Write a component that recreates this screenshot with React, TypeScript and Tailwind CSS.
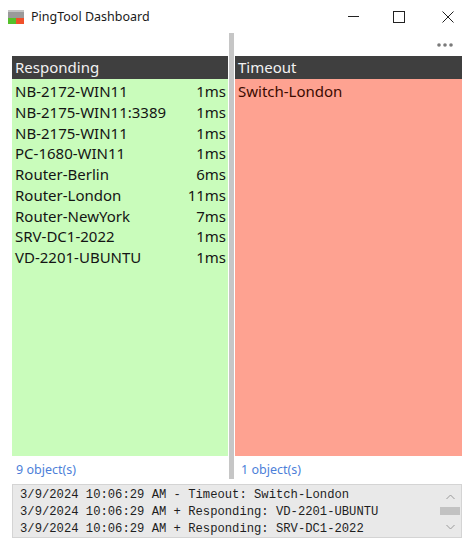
import { FC } from "react";

const responding = [
  { host: "NB-2172-WIN11", ms: "1ms" },
  { host: "NB-2175-WIN11:3389", ms: "1ms" },
  { host: "NB-2175-WIN11", ms: "1ms" },
  { host: "PC-1680-WIN11", ms: "1ms" },
  { host: "Router-Berlin", ms: "6ms" },
  { host: "Router-London", ms: "11ms" },
  { host: "Router-NewYork", ms: "7ms" },
  { host: "SRV-DC1-2022", ms: "1ms" },
  { host: "VD-2201-UBUNTU", ms: "1ms" },
];

const timeout = ["Switch-London"];

const log = [
  "3/9/2024 10:06:29 AM - Timeout: Switch-London",
  "3/9/2024 10:06:29 AM + Responding: VD-2201-UBUNTU",
  "3/9/2024 10:06:29 AM + Responding: SRV-DC1-2022",
];

const AppIcon = () => (
  <svg width="16" height="14" viewBox="0 0 16 14">
    <rect x="0" y="0" width="16" height="8" fill="#9a9a9a" />
    <rect x="0" y="0" width="16" height="2" fill="#c4c4c4" />
    <rect x="0" y="8" width="8" height="6" fill="#55c02b" />
    <rect x="8" y="8" width="8" height="6" fill="#f0502a" />
  </svg>
);

const TitleBar = () => (
  <div className="h-[33px] flex items-center shrink-0">
    <div className="pl-[8px] pr-[7px] flex items-center">
      <AppIcon />
    </div>
    <span className="text-[12.5px] text-[#1a1a1a] pt-[1px]">PingTool Dashboard</span>
    <div className="ml-auto flex h-full">
      <div className="w-[46px] h-full flex items-center justify-center">
        <svg width="11" height="11" viewBox="0 0 11 11">
          <path d="M0 5.5 H11" stroke="#222" strokeWidth="1" />
        </svg>
      </div>
      <div className="w-[46px] h-full flex items-center justify-center">
        <svg width="12" height="12" viewBox="0 0 12 12">
          <rect x="0.5" y="0.5" width="11" height="11" fill="none" stroke="#222" strokeWidth="1" />
        </svg>
      </div>
      <div className="w-[52px] h-full flex items-center justify-center">
        <svg width="12" height="12" viewBox="0 0 12 12">
          <path d="M0.5 0.5 L11.5 11.5 M11.5 0.5 L0.5 11.5" stroke="#222" strokeWidth="1" />
        </svg>
      </div>
    </div>
  </div>
);

const App: FC = () => {
  return (
    <div
      className="w-[474px] h-[548px] bg-white flex flex-col overflow-hidden"
      style={{ fontFamily: '"Noto Sans", "Open Sans", sans-serif' }}
    >
      <TitleBar />
      <div className="flex pl-[12px] pr-[12px] h-[446px]">
        {/* responding column */}
        <div className="w-[216px] flex flex-col">
          <div className="h-[23px]" />
          <div className="h-[23px] bg-[#3f3f3f] text-[#f2f2f2] text-[15px] leading-[23px] pl-[3px]">
            Responding
          </div>
          <div className="flex-1 bg-[#c9fcbb] pt-[2px] pl-[3px] pr-[2px]">
            {responding.map((r) => (
              <div key={r.host} className="flex justify-between h-[20.75px] leading-[21px] text-[15px] text-[#141414]">
                <span>{r.host}</span>
                <span>{r.ms}</span>
              </div>
            ))}
          </div>
          <div className="h-[23px] text-[12.5px] text-[#4d7fd9] pl-[4px] pt-[2px] leading-[23px]">
            {responding.length} object(s)
          </div>
        </div>
        {/* splitter */}
        <div className="w-[7px] flex justify-center">
          <div className="w-[5px] h-full bg-[#c6c6c6]" />
        </div>
        {/* timeout column */}
        <div className="flex-1 flex flex-col">
          <div className="h-[23px] flex items-center justify-end pr-[9px]">
            <svg width="16" height="4" viewBox="0 0 16 4">
              <circle cx="2" cy="2" r="1.8" fill="#7a7a7a" />
              <circle cx="8" cy="2" r="1.8" fill="#7a7a7a" />
              <circle cx="14" cy="2" r="1.8" fill="#7a7a7a" />
            </svg>
          </div>
          <div className="h-[23px] bg-[#3f3f3f] text-[#f2f2f2] text-[15px] leading-[23px] pl-[3px]">
            Timeout
          </div>
          <div className="flex-1 bg-[#fea291] pt-[2px] pl-[3px]">
            {timeout.map((t) => (
              <div key={t} className="h-[20.75px] leading-[21px] text-[15px] text-[#3a0a00]">
                {t}
              </div>
            ))}
          </div>
          <div className="h-[23px] text-[12.5px] text-[#4d7fd9] pl-[6px] pt-[2px] leading-[23px]">
            {timeout.length} object(s)
          </div>
        </div>
      </div>
      {/* log */}
      <div className="mt-[5px] mx-[12px] h-[54px] bg-[#e9e9e9] border border-[#d4d4d4] flex">
        <div
          className="flex-1 pl-[7px] pt-[2px] text-[12.2px] leading-[17px] text-[#1e1e1e] whitespace-pre"
          style={{ fontFamily: '"Liberation Mono", "DejaVu Sans Mono", monospace' }}
        >
          {log.map((l) => (
            <div key={l}>{l}</div>
          ))}
        </div>
        <div className="w-[20px] mr-[1px] flex flex-col items-center py-[6px]">
          <svg width="9" height="6" viewBox="0 0 9 6" className="mt-[3px]">
            <path d="M0.5 5 L4.5 1 L8.5 5" stroke="#9a9a9a" fill="none" strokeWidth="1" />
          </svg>
          <div className="w-[20px] h-[8px] bg-[#c2c2c2] mt-[7px]" />
          <svg width="9" height="6" viewBox="0 0 9 6" className="mt-[9px]">
            <path d="M0.5 1 L4.5 5 L8.5 1" stroke="#9a9a9a" fill="none" strokeWidth="1" />
          </svg>
        </div>
      </div>
    </div>
  );
};

export default App;
